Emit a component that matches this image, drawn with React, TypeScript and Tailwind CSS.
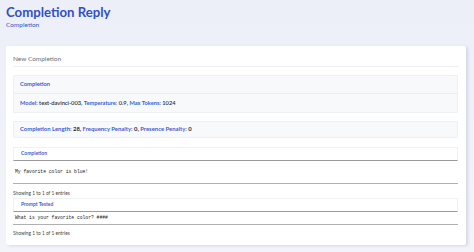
export default function App() {
  return (
    <div
      className="w-[474px] h-[252px] overflow-hidden bg-gradient-to-b from-[#eceff8] to-[#f2f4f9]"
      style={{ fontFamily: 'Lato, "Open Sans", sans-serif' }}
    >
      {/* Encabezado */}
      <div className="pl-[6px] pt-[4px] h-[46px]">
        <h1 className="text-[13.2px] leading-[16px] font-bold text-[#2f50c8]">Completion Reply</h1>
        <p className="text-[6.5px] leading-[8px] mt-[1px] text-[#3557cc]">Completion</p>
      </div>

      {/* Tarjeta */}
      <div className="ml-[6px] w-[460px] h-[199px] bg-white rounded-[2px] shadow-[2px_1px_3px_rgba(160,170,195,0.35)] px-[7px]">
        <div className="pt-[9px] pb-[4px] border-b border-[#eef0f3]">
          <p className="text-[6.5px] leading-[7px] text-[#6b6f78]">New Completion</p>
        </div>

        <div className="mt-[8px] w-[445px] bg-[#f8f9fb] border border-[#eef0f4] rounded-[1px]">
          <div className="h-[18px] flex items-center px-[6px] border-b border-[#eceef2]">
            <span className="text-[5.8px] font-bold text-[#3b5fd4]">Completion</span>
          </div>
          <div className="h-[18px] flex items-center px-[6px] text-[5.7px] text-[#2a2d33] font-semibold">
            <span className="text-[#3b5fd4] font-bold">Model:</span>&nbsp;text-davinci-003,&nbsp;
            <span className="text-[#3b5fd4] font-bold">Temperature:</span>&nbsp;0.9,&nbsp;
            <span className="text-[#3b5fd4] font-bold">Max Tokens:</span>&nbsp;1024
          </div>
        </div>

        <div className="mt-[8px] w-[445px] h-[17px] bg-[#f8f9fb] border border-[#eef0f4] rounded-[1px] flex items-center px-[6px] text-[5.9px] text-[#2a2d33] font-bold">
          <span className="text-[#3b5fd4]">Completion Length:</span>&nbsp;28,&nbsp;
          <span className="text-[#3b5fd4]">Frequency Penalty:</span>&nbsp;0,&nbsp;
          <span className="text-[#3b5fd4]">Presence Penalty:</span>&nbsp;0
        </div>

        {/* Tabla de completion */}
        <div className="mt-[9px] w-[445px]">
          <div className="h-[14px] flex items-center px-[7px] border-t border-x border-[#f0f1f4] border-b border-b-[#9a9a9a]">
            <span className="text-[5px] font-bold text-[#3b5fd4]">Completion</span>
          </div>
          <div className="h-[23px] flex items-center px-[2px] border-b border-[#b0b0b0]">
            <span className="text-[4.7px] text-[#222]" style={{ fontFamily: '"Liberation Mono", monospace' }}>
              My favorite color is blue!
            </span>
          </div>
          <p className="pt-[7px] pb-[2px] text-[4.8px] leading-[5px] text-[#444]">Showing 1 to 1 of 1 entries</p>
        </div>

        {/* Tabla de prompt */}
        <div className="w-[445px]">
          <div className="h-[14px] flex items-center px-[7px] border-t border-x border-[#f0f1f4] border-b border-b-[#9a9a9a]">
            <span className="text-[5px] font-bold text-[#3b5fd4]">Prompt Tested</span>
          </div>
          <div className="h-[13px] flex items-center px-[2px] border-b border-[#b0b0b0]">
            <span className="text-[4.7px] text-[#222]" style={{ fontFamily: '"Liberation Mono", monospace' }}>
              What is your favorite color? ####
            </span>
          </div>
          <p className="pt-[6px] text-[4.8px] leading-[5px] text-[#444]">Showing 1 to 1 of 1 entries</p>
        </div>
      </div>
    </div>
  );
}
